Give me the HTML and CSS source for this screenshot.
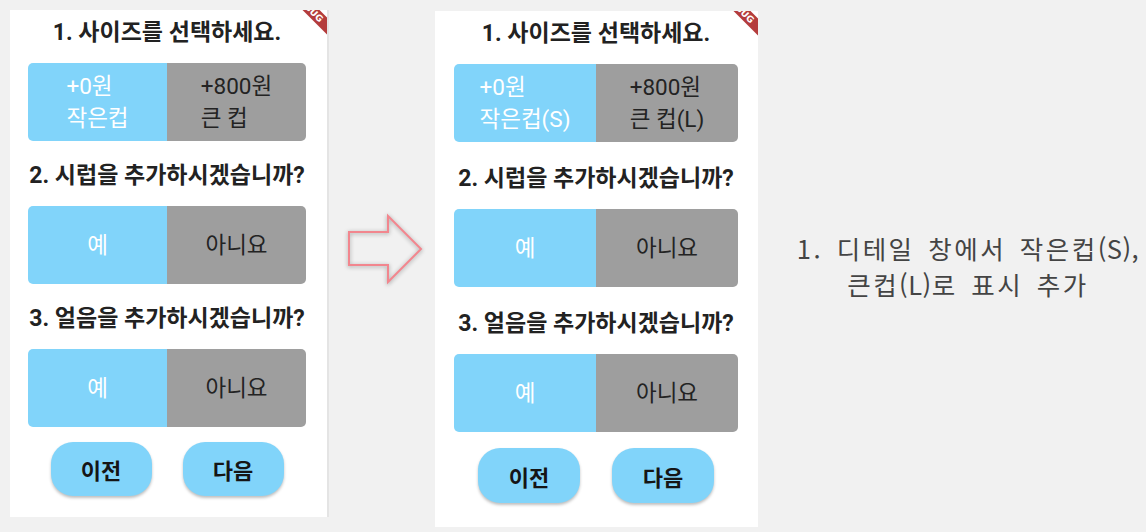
FILE: index.html
```html
<!DOCTYPE html>
<html lang="ko">
<head>
<meta charset="utf-8">
<link rel="stylesheet" href="styles.css">
</head>
<body>
<div class="stage">
  <section class="phone phone-a">
    <div class="banner"><span>DEBUG</span></div>
    <h2 class="q">1. 사이즈를 선택하세요.</h2>
    <div class="toggle">
      <div class="opt on"><span class="lines">+0원<br>작은컵</span></div>
      <div class="opt off"><span class="lines">+800원<br>큰 컵</span></div>
    </div>
    <h2 class="q">2. 시럽을 추가하시겠습니까?</h2>
    <div class="toggle">
      <div class="opt on">예</div>
      <div class="opt off">아니요</div>
    </div>
    <h2 class="q">3. 얼음을 추가하시겠습니까?</h2>
    <div class="toggle">
      <div class="opt on">예</div>
      <div class="opt off">아니요</div>
    </div>
    <div class="nav">
      <button class="btn">이전</button>
      <button class="btn">다음</button>
    </div>
  </section>

  <div class="arrow">
    <svg width="82" height="80" viewBox="0 0 82 80">
      <polygon points="4,22 43,22 43,6 76,39 43,72 43,55 4,55" fill="none" stroke="#f2868e" stroke-width="2"/>
    </svg>
  </div>

  <section class="phone phone-b">
    <div class="banner"><span>DEBUG</span></div>
    <h2 class="q">1. 사이즈를 선택하세요.</h2>
    <div class="toggle">
      <div class="opt on"><span class="lines">+0원<br>작은컵(S)</span></div>
      <div class="opt off"><span class="lines">+800원<br>큰 컵(L)</span></div>
    </div>
    <h2 class="q">2. 시럽을 추가하시겠습니까?</h2>
    <div class="toggle">
      <div class="opt on">예</div>
      <div class="opt off">아니요</div>
    </div>
    <h2 class="q">3. 얼음을 추가하시겠습니까?</h2>
    <div class="toggle">
      <div class="opt on">예</div>
      <div class="opt off">아니요</div>
    </div>
    <div class="nav">
      <button class="btn">이전</button>
      <button class="btn">다음</button>
    </div>
  </section>

  <p class="note">1. 디테일 창에서 작은컵<span class="lat">(S),</span><br>큰컵<span class="lat">(L)</span>로 표시 추가</p>
</div>
</body>
</html>
```

FILE: styles.css
```css
* { box-sizing: border-box; }
html, body { margin: 0; padding: 0; }
body {
  background: #f1f1f1;
  width: 1146px;
  height: 532px;
  overflow: hidden;
  font-family: Roboto, "Noto Sans CJK KR", sans-serif;
}
.stage {
  display: flex;
  align-items: flex-start;
}
.phone {
  position: relative;
  overflow: hidden;
  background: #ffffff;
  display: flex;
  flex-direction: column;
}
.phone-a {
  margin: 10px 0 0 10px;
  width: 319px;
  height: 507px;
  padding: 8px 21px 0 18px;
  border-right: 2px solid #e4e4e4;
}
.phone-b {
  margin: 11px 0 0 0;
  width: 323px;
  height: 516px;
  padding: 8px 20px 0 19px;
}
.q {
  margin: 0;
  height: 30px;
  line-height: 30px;
  text-align: center;
  font-size: 23px;
  font-weight: 700;
  color: #222222;
  white-space: nowrap;
}
.toggle {
  display: flex;
  height: 78px;
  margin-top: 15px;
  border-radius: 5px;
  overflow: hidden;
}
.phone-a .toggle { margin-bottom: 20px; }
.phone-b .toggle { margin-bottom: 22px; }
.opt {
  flex: 1;
  display: flex;
  align-items: center;
  justify-content: center;
  font-size: 22.5px;
  line-height: 32px;
}
.on { background: #81d4fa; color: #ffffff; }
.off { background: #9e9e9e; color: #232323; }
.lines { display: inline-block; text-align: left; }
.nav {
  display: flex;
  justify-content: center;
  gap: 31px;
  margin-top: -5px;
}
.phone-b .nav { gap: 32px; margin-top: -6px; }
.btn {
  width: 101px;
  height: 54px;
  border: none;
  border-radius: 22px;
  background: #81d4fa;
  box-shadow: 0 2px 3px rgba(0, 0, 0, 0.25);
  font-family: Roboto, "Noto Sans CJK KR", sans-serif;
  font-size: 22px;
  font-weight: 700;
  color: #151515;
  padding: 0;
}
.phone-b .btn { width: 102px; height: 55px; }
.banner {
  position: absolute;
  top: 2px;
  right: -52px;
  width: 120px;
  height: 12px;
  background: #b43c3c;
  transform: rotate(45deg);
  color: #ffffff;
  font-family: "DejaVu Sans", sans-serif;
  font-size: 9px;
  font-weight: 700;
  line-height: 12px;
  text-align: center;
}
.banner span { display: inline-block; transform: translateX(-14px); }
.arrow {
  margin: 210px 0 0 16px;
  width: 90px;
  height: 80px;
  filter: drop-shadow(0 1px 2px rgba(0, 0, 0, 0.35));
}
.note {
  margin: 230px 0 0 37px;
  width: 346px;
  text-align: center;
  font-family: "Noto Sans CJK KR", sans-serif;
  font-weight: 400;
  font-size: 25.5px;
  line-height: 36px;
  letter-spacing: 2.5px;
  word-spacing: 4px;
  color: #444444;
  white-space: nowrap;
}
.lat { letter-spacing: 0.5px; }
```
